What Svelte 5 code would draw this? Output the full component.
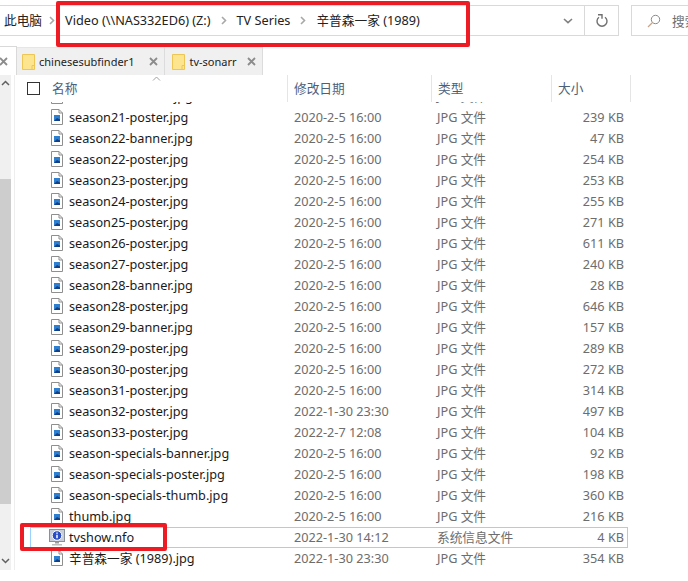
<script lang="ts">
  type Row = { name: string; date: string; type?: string; size: string; info?: boolean };

  const p = '2020-2-5 16:00';
  const rows: Row[] = [
    { name: 'season21-banner.jpg', date: p, size: '42 KB' },
    { name: 'season21-poster.jpg', date: p, size: '239 KB' },
    { name: 'season22-banner.jpg', date: p, size: '47 KB' },
    { name: 'season22-poster.jpg', date: p, size: '254 KB' },
    { name: 'season23-poster.jpg', date: p, size: '253 KB' },
    { name: 'season24-poster.jpg', date: p, size: '255 KB' },
    { name: 'season25-poster.jpg', date: p, size: '271 KB' },
    { name: 'season26-poster.jpg', date: p, size: '611 KB' },
    { name: 'season27-poster.jpg', date: p, size: '240 KB' },
    { name: 'season28-banner.jpg', date: p, size: '28 KB' },
    { name: 'season28-poster.jpg', date: p, size: '646 KB' },
    { name: 'season29-banner.jpg', date: p, size: '157 KB' },
    { name: 'season29-poster.jpg', date: p, size: '289 KB' },
    { name: 'season30-poster.jpg', date: p, size: '272 KB' },
    { name: 'season31-poster.jpg', date: p, size: '314 KB' },
    { name: 'season32-poster.jpg', date: '2022-1-30 23:30', size: '497 KB' },
    { name: 'season33-poster.jpg', date: '2022-2-7 12:08', size: '104 KB' },
    { name: 'season-specials-banner.jpg', date: p, size: '92 KB' },
    { name: 'season-specials-poster.jpg', date: p, size: '198 KB' },
    { name: 'season-specials-thumb.jpg', date: p, size: '360 KB' },
    { name: 'thumb.jpg', date: p, size: '216 KB' },
    { name: 'tvshow.nfo', date: '2022-1-30 14:12', type: '系统信息文件', size: '4 KB', info: true },
    { name: '辛普森一家 (1989).jpg', date: '2022-1-30 23:30', size: '354 KB' }
  ];
  const crumbs = ['Video (\\\\NAS332ED6) (Z:)', 'TV Series', '辛普森一家 (1989)'];
  const tabs = ['chinesesubfinder1', 'tv-sonarr'];
</script>

{#snippet chevron()}
  <svg class="sep" width="6" height="9" viewBox="0 0 6 9"><path d="M1 1l3.500 3.500L1 8" fill="none" stroke="#a8a8a8" stroke-width="1.600" /></svg>
{/snippet}

{#snippet cross()}
  <svg class="cross" width="9" height="9" viewBox="0 0 9 9"><path d="M1 1l7 7M8 1l-7 7" stroke="#8c8c8c" stroke-width="1.800" /></svg>
{/snippet}

{#snippet folder()}
  <svg class="folder" width="13" height="16" viewBox="0 0 13 16">
    <path d="M.5.5h12v15H.5z" fill="#fde58f" stroke="#eec654" />
    <path d="M10 15.500v-4h2.500" fill="none" stroke="#eec654" />
  </svg>
{/snippet}

<div class="explorer">
  <div class="toolbar">
    <div class="address">
      <span class="crumb first">此电脑</span>
      {@render chevron()}
      {#each crumbs as crumb, i (crumb)}
        <span class="crumb">{crumb}</span>
        {#if i < crumbs.length - 1}{@render chevron()}{/if}
      {/each}
      <span class="spacer"></span>
      <div class="addr-btn drop">
        <svg width="10" height="6" viewBox="0 0 10 6"><path d="M1 1l4 3.600L9 1" fill="none" stroke="#808080" stroke-width="1.600" /></svg>
      </div>
      <div class="addr-btn refresh">
        <svg width="12" height="14" viewBox="0 0 12 14">
          <path d="M3 3.200a5 5 0 1 0 6 0" fill="none" stroke="#707070" stroke-width="1.400" />
          <path d="M2 .8h4v4" fill="none" stroke="#707070" stroke-width="1.400" />
        </svg>
      </div>
    </div>
    <div class="search">
      <svg width="14" height="14" viewBox="0 0 14 14">
        <circle cx="8.500" cy="5.500" r="4.200" fill="none" stroke="#8a8a8a" />
        <path d="M5.500 8.500L1 13" stroke="#c8a48a" stroke-width="1.200" />
      </svg>
      <span>搜索</span>
    </div>
  </div>

  <div class="tabbar">
    <div class="tab active">{@render cross()}</div>
    {#each tabs as tab (tab)}
      <div class="tab">
        {@render folder()}
        <span class="tab-label">{tab}</span>
        {@render cross()}
      </div>
    {/each}
  </div>

  <div class="body">
    <div class="scrollbar">
      <svg width="9" height="6" viewBox="0 0 9 6"><path d="M1 5l3.500-3.500L8 5" fill="none" stroke="#606060" stroke-width="1.500" /></svg>
      <div class="thumb"></div>
      <svg width="9" height="6" viewBox="0 0 9 6"><path d="M1 1l3.500 3.500L8 1" fill="none" stroke="#606060" stroke-width="1.500" /></svg>
    </div>

    <div class="pane">
      <div class="header">
        <span class="check"></span>
        <span class="h-name">名称
          <svg class="sort" width="9" height="5" viewBox="0 0 9 5"><path d="M1 4.500l3.500-3.500L8 4.500" fill="none" stroke="#a0a0a0" /></svg>
        </span>
        <span class="h-date">修改日期</span>
        <span class="h-type">类型</span>
        <span class="h-size">大小</span>
      </div>
      <div class="list">
        <div class="rows">
          {#each rows as row (row.name)}
            <div class="row" class:focus={row.info}>
              <span class="icon">
                {#if row.info}
                  <svg width="16" height="17" viewBox="0 0 16 17">
                    <rect x=".5" y=".5" width="15" height="12" fill="#c9ced8" stroke="#8a8f9c" />
                    <circle cx="8" cy="6.500" r="4.800" fill="#2a4cc4" stroke="#fff" />
                    <path d="M8 3.600v1.200M8 5.800V9.200" stroke="#fff" stroke-width="1.500" />
                    <path d="M6 13h4v1.500H6z" fill="#9a9a9a" />
                    <path d="M3 15h10v1.500H3z" fill="#bdbdbd" />
                  </svg>
                {:else}
                  <svg width="12" height="16" viewBox="0 0 12 16">
                    <path d="M.5.5h7.500l3.500 3.500v11.500H.5z" fill="#fff" stroke="#8f8f8f" />
                    <path d="M8 .5V4h3.500" fill="none" stroke="#8f8f8f" />
                    <rect x="3" y="6" width="6" height="6" fill="#2f7fd0" />
                    <path d="M3 12l3-3 3 1.500V12z" fill="#123f86" />
                  </svg>
                {/if}
              </span>
              <span class="name">{row.name}</span>
              <span class="date">{row.date}</span>
              <span class="type">{row.type ?? 'JPG 文件'}</span>
              <span class="size">{row.size}</span>
            </div>
          {/each}
        </div>
      </div>
    </div>
  </div>

  <div class="mark mark-address"></div>
  <div class="mark mark-file"></div>
</div>

<style>
  :global(body) {
    margin: 0;
    background: #fff;
  }

  .explorer {
    position: relative;
    width: 688px;
    height: 581px;
    overflow: hidden;
    background: #fff;
    font-family: "Noto Sans", "Noto Sans CJK SC", sans-serif;
    font-size: 12.7px;
    color: #1a1a1a;
  }

  .toolbar {
    display: flex;
    gap: 12px;
    height: 47px;
    padding-top: 5px;
    box-sizing: border-box;
  }

  .address {
    display: flex;
    align-items: center;
    flex: none;
    box-sizing: border-box;
    width: 620px;
    height: 31px;
    margin-left: -1px;
    border: 1px solid #d9d9d9;
  }

  .crumb {
    margin-top: -2px;
    white-space: nowrap;
    color: #222;
  }

  .crumb.first {
    margin-left: 4px;
    margin-right: -3px;
  }

  .sep {
    margin: 0 10px;
    flex: none;
  }

  .spacer {
    flex: 1;
  }

  .addr-btn {
    display: flex;
    align-items: center;
    justify-content: center;
    height: 100%;
  }

  .drop {
    width: 32px;
  }

  .refresh {
    width: 33px;
    border-left: 1px solid #d9d9d9;
  }

  .search {
    display: flex;
    align-items: center;
    gap: 11px;
    flex: none;
    box-sizing: border-box;
    width: 120px;
    height: 31px;
    padding-left: 15px;
    border: 1px solid #d9d9d9;
    color: #707070;
  }

  .tabbar {
    display: flex;
    height: 28px;
  }

  .tab {
    display: flex;
    align-items: center;
    box-sizing: border-box;
    height: 28px;
    padding: 0 6px 0 7px;
    background: #f0f0f0;
    border-top: 1px solid #e6e6e6;
    border-right: 1px solid #dcdcdc;
    font-size: 11px;
  }

  .tab.active {
    width: 17px;
    margin-top: -1px;
    height: 29px;
    padding: 0;
    background: #fff;
    border-top-color: #d9d9d9;
    border-right-color: #d9d9d9;
  }

  .tab.active + .tab {
    padding-left: 5px;
  }

  .tab.active + .tab .tab-label {
    margin-right: 15px;
  }

  .tab.active .cross {
    margin-left: -1px;
  }

  .tab-label {
    margin: 0 10px 0 4px;
    color: #222;
  }

  .folder,
  .cross {
    flex: none;
  }

  .body {
    display: flex;
    height: 495px;
  }

  .scrollbar {
    display: flex;
    flex-direction: column;
    align-items: center;
    flex: none;
    box-sizing: border-box;
    width: 11px;
    padding: 5px 0 6px;
    background: #f0f0f0;
  }

  .thumb {
    align-self: stretch;
    height: 325px;
    margin: 93px 0 54px;
    background: #cdcdcd;
  }

  .pane {
    flex: 1;
    margin-left: 3px;
    border-left: 1px solid #eeeeee;
    min-width: 0;
  }

  .header {
    display: grid;
    grid-template-columns: 37px 235px 144px 120px 80px;
    align-items: center;
    height: 27px;
    color: #4c607a;
  }

  .check {
    justify-self: start;
    width: 11px;
    height: 11px;
    margin-left: 12px;
    border: 1px solid #333;
  }

  .h-name,
  .h-date,
  .h-type,
  .h-size {
    position: relative;
    box-sizing: border-box;
    height: 100%;
    line-height: 26px;
    padding-left: 6px;
    white-space: nowrap;
  }

  .h-name {
    padding-left: 0;
  }

  .h-date,
  .h-type,
  .h-size {
    border-left: 1px solid #e5e5e5;
  }

  .h-size {
    border-right: 1px solid #e5e5e5;
  }

  .sort {
    position: absolute;
    top: 1px;
    left: 100px;
  }

  .list {
    height: 468px;
    overflow: hidden;
  }

  .rows {
    margin-top: -21px;
    padding-top: 5px;
  }

  .row {
    display: grid;
    grid-template-columns: 18px 225px 143px 120px 67px;
    align-items: center;
    box-sizing: border-box;
    height: 21px;
    width: 598px;
    margin-left: 15px;
    padding-left: 20px;
    padding-bottom: 3px;
    line-height: 16px;
    color: #6d6d6d;
    white-space: nowrap;
    border: 1px solid transparent;
    border-bottom-width: 0;
  }

  .row .name {
    color: #1a1a1a;
  }

  .row .icon {
    display: flex;
    height: 16px;
    margin-top: 1px;
  }

  .row.focus {
    padding-left: 18px;
    padding-bottom: 2px;
    grid-template-columns: 20px 225px 143px 120px 67px;
    border: 1px solid #99d1ff;
  }

  .size {
    text-align: right;
  }

  .mark {
    position: absolute;
    box-sizing: border-box;
    border: 4px solid #ed1c24;
    border-radius: 2px;
  }

  .mark-address {
    left: 56px;
    top: 1px;
    width: 414px;
    height: 46px;
  }

  .mark-file {
    left: 20px;
    top: 523px;
    width: 147px;
    height: 28px;
  }
</style>
